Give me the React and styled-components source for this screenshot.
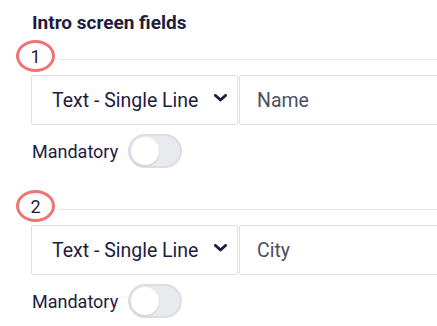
import styled, { createGlobalStyle } from 'styled-components';

const GlobalStyle = createGlobalStyle`
  html, body {
    margin: 0;
    padding: 0;
    background: #ffffff;
    overflow: hidden;
  }
  body {
    font-family: Roboto, "Liberation Sans", sans-serif;
    color: #1e1c40;
  }
`;

const fields = [
  { id: 1, type: 'Text - Single Line', label: 'Name' },
  { id: 2, type: 'Text - Single Line', label: 'City' },
];

export default function App() {
  return (
    <>
      <GlobalStyle />
      <Page>
        <Title>Intro screen fields</Title>
        {fields.map((f) => (
          <Field key={f.id}>
            <Header>
              <Badge>{f.id}</Badge>
              <Rule />
            </Header>
            <Inputs>
              <Select>
                <span>{f.type}</span>
                <svg width="13" height="8" viewBox="0 0 13 8">
                  <polyline
                    points="1.5,1.5 6.5,6 11.5,1.5"
                    fill="none"
                    stroke="#1e1c40"
                    strokeWidth="3"
                    strokeLinecap="round"
                    strokeLinejoin="round"
                  />
                </svg>
              </Select>
              <TextBox>{f.label}</TextBox>
            </Inputs>
            <ToggleRow>
              <span>Mandatory</span>
              <Toggle>
                <Knob />
              </Toggle>
            </ToggleRow>
          </Field>
        ))}
      </Page>
    </>
  );
}

const Page = styled.div`
  width: 520px;
  padding: 12px 0 0 31px;
`;

const Title = styled.div`
  font-size: 19px;
  line-height: 22px;
  font-weight: 700;
  padding-left: 1px;
  margin-bottom: 6px;
`;

const Field = styled.div`
  margin-bottom: 22px;
`;

const Header = styled.div`
  display: flex;
  align-items: flex-start;
  height: 35px;
  margin-left: -15px;
`;

const Badge = styled.div`
  box-sizing: border-box;
  width: 39px;
  height: 32px;
  border: 3px solid #f07272;
  border-radius: 50%;
  display: flex;
  align-items: center;
  justify-content: center;
  font-size: 18px;
  color: #1e1c40;
`;

const Rule = styled.div`
  flex: 1;
  height: 1px;
  background: #e7e7ea;
  margin: 19px 0 0 4px;
`;

const Inputs = styled.div`
  display: flex;
  gap: 1px;
  height: 50px;
`;

const Box = styled.div`
  box-sizing: border-box;
  height: 50px;
  border: 1px solid #dcdfe4;
  border-radius: 2px;
  display: flex;
  align-items: center;
  font-size: 19.5px;
`;

const Select = styled(Box)`
  width: 207px;
  padding: 0 10px 0 20px;
  justify-content: space-between;
  color: #1e1c40;
  svg {
    margin-top: -4px;
  }
`;

const TextBox = styled(Box)`
  flex: 1;
  padding-left: 17px;
  color: #4b5063;
`;

const ToggleRow = styled.div`
  display: flex;
  align-items: center;
  gap: 10px;
  margin-top: 9px;
  padding-left: 1px;
  font-size: 18px;
  color: #1e1c40;
`;

const Toggle = styled.div`
  box-sizing: border-box;
  width: 54px;
  height: 34px;
  border: 2px solid #dcdee3;
  border-radius: 17px;
  background: #e9eaee;
  padding: 1px;
  display: flex;
  align-items: center;
`;

const Knob = styled.div`
  width: 28px;
  height: 28px;
  border-radius: 50%;
  background: #ffffff;
  box-shadow: 0 1px 2px rgba(0, 0, 0, 0.12);
`;
